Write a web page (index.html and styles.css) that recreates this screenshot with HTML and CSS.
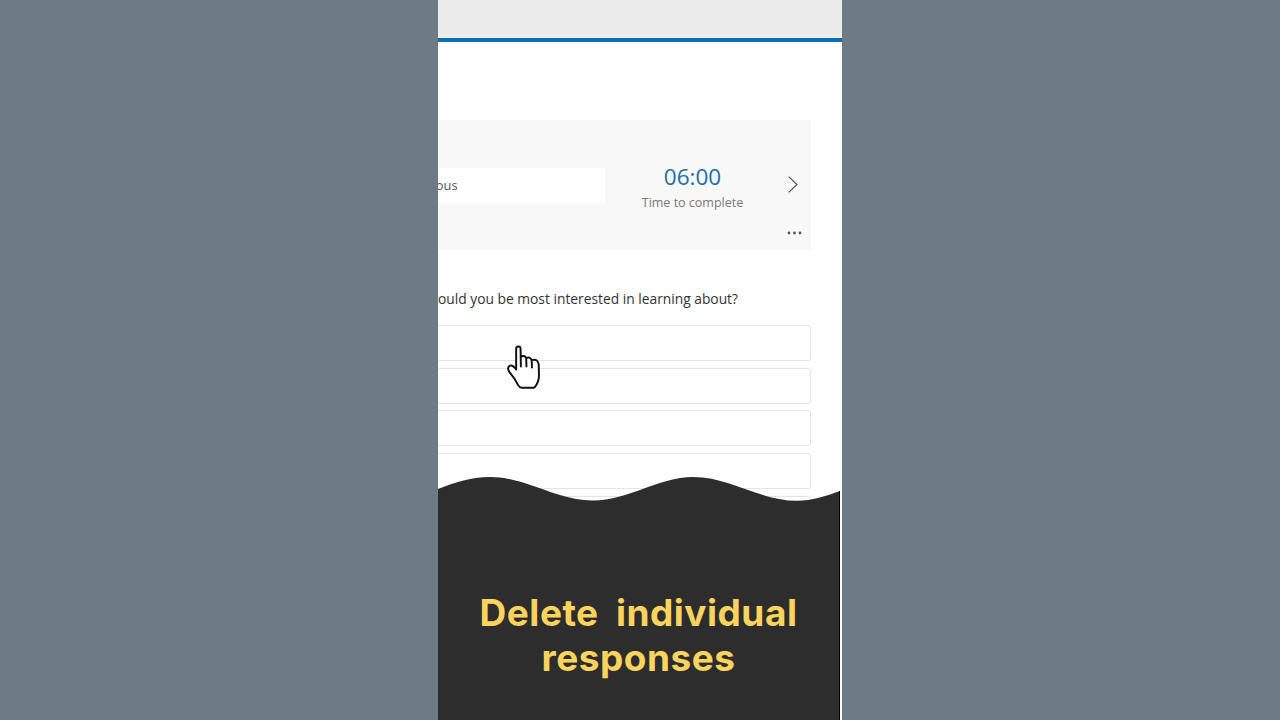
FILE: index.html
```html
<!DOCTYPE html>
<html lang="en">
<head>
<meta charset="utf-8">
<title>Delete individual responses</title>
<link rel="stylesheet" href="styles.css">
</head>
<body>
<div class="phone">
  <header class="topbar"></header>
  <main class="content">
    <section class="card">
      <div class="field"><span>ous</span></div>
      <div class="timer">
        <div class="time">06:00</div>
        <div class="time-label">Time to complete</div>
      </div>
      <svg class="chevron" viewBox="0 0 10 17" width="10" height="17"><path d="M0.7 0.7 L9 8.5 L0.7 16.3" /></svg>
      <svg class="dots" viewBox="0 0 15 4" width="15" height="4"><circle cx="2" cy="2" r="1.4"/><circle cx="7.5" cy="2" r="1.4"/><circle cx="13" cy="2" r="1.4"/></svg>
    </section>
    <p class="question">ould you be most interested in learning about?</p>
    <div class="options">
      <div class="option"></div>
      <div class="option"></div>
      <div class="option"></div>
      <div class="option"></div>
      <div class="option"></div>
    </div>
  </main>
  <svg class="cursor" viewBox="0 0 50 55" width="49" height="54">
    <path class="hand" d="M16.5 30 L16.5 9 Q16.5 6.5 18.7 6.5 Q21 6.5 21 9 L21.3 27 M21 17.5 Q25 14.5 26.7 18.5 L27 27 M26.7 18.5 Q30.5 16.5 32.3 20.5 L32.6 28 M32.3 20.5 Q38.5 18.5 39.5 25 L39.8 36 Q39.8 43 35.5 48 Q34.5 48.7 33 48.7 L22 48.7 Q20 48.7 18.5 46 Q15 39 9.5 32.5 Q7 28.5 9.5 26.5 Q12.5 24.5 16.5 30" />
  </svg>
  <footer class="banner">
    <svg class="wave" viewBox="0 0 402 25" width="402" height="25" preserveAspectRatio="none">
      <path class="wave-fill" d="M0 13 C16 7 32 1 52 1 C88 1 118 24.500 155 24.500 C191 24.500 220 1 255 1 C292 1 322 24.800 359 24.800 C374 24.800 388 20 402 15 L402 25 L0 25 Z" />
      <path class="wave-edge" d="M401.500 15 L401.500 25" />
    </svg>
    <div class="panel">
      <h1 class="caption">Delete individual<br>responses</h1>
    </div>
  </footer>
</div>
</body>
</html>
```

FILE: styles.css
```css
* { box-sizing: border-box; }

html, body {
  margin: 0;
  height: 100%;
}

body {
  display: flex;
  justify-content: center;
  background: #6e7a84;
  overflow: hidden;
  font-family: "Open Sans", "Noto Sans", sans-serif;
}

.phone {
  position: relative;
  width: 404px;
  height: 720px;
  background: #fff;
  overflow: hidden;
}

.topbar {
  height: 42px;
  background: #ececec;
  border-bottom: 4px solid #126cb2;
}

.content {
  padding: 78px 31px 0 0;
}

.card {
  position: relative;
  display: flex;
  align-items: center;
  height: 130px;
  background: #f8f8f8;
}

.field {
  display: flex;
  justify-content: flex-end;
  align-items: center;
  width: 167px;
  height: 35px;
  padding-right: 147.500px;
  background: #fff;
  font-size: 12.800px;
  color: #555;
}

.timer {
  flex: 1;
  text-align: center;
  margin-top: 3px;
}

.time {
  font-size: 22.500px;
  line-height: 32px;
  color: #1f6ea8;
}

.time-label {
  font-size: 12.500px;
  line-height: 20px;
  color: #7a7a7a;
}

.chevron {
  flex: none;
  margin: -2px 13px 0 8px;
}

.chevron path {
  fill: none;
  stroke: #4a4a4a;
  stroke-width: 1.100;
}

.dots {
  position: absolute;
  right: 9px;
  bottom: 15px;
  fill: #555;
}

.question {
  margin: 39px 73px 16px 0;
  height: 20px;
  font-size: 13.800px;
  line-height: 20px;
  text-align: right;
  color: #333;
  white-space: nowrap;
}

.options {
  display: flex;
  flex-direction: column;
  gap: 6.700px;
  margin-left: -6px;
}

.option {
  height: 36px;
  background: #fff;
  border: 1px solid #e4e4e4;
  border-radius: 3px;
}

.cursor {
  position: absolute;
  left: 62px;
  top: 340px;
}

.hand {
  fill: #fff;
  stroke: #111;
  stroke-width: 2;
  stroke-linejoin: round;
  stroke-linecap: round;
}

.banner {
  position: absolute;
  left: 0;
  top: 476px;
  bottom: 0;
  width: 402px;
  display: flex;
  flex-direction: column;
}

.wave {
  display: block;
  flex: none;
}

.wave-fill {
  fill: #2d2d2d;
}

.wave-edge {
  stroke: #000;
  stroke-width: 1;
}

.panel {
  flex: 1;
  background: #2d2d2d;
  border-right: 1px solid #000;
  padding-top: 89px;
}

.caption {
  margin: 0;
  font-family: "Inter", "Open Sans", sans-serif;
  font-size: 37px;
  line-height: 45px;
  font-weight: 700;
  letter-spacing: 0.500px;
  word-spacing: 8px;
  text-align: center;
  color: #fbd35e;
  white-space: nowrap;
}
```
